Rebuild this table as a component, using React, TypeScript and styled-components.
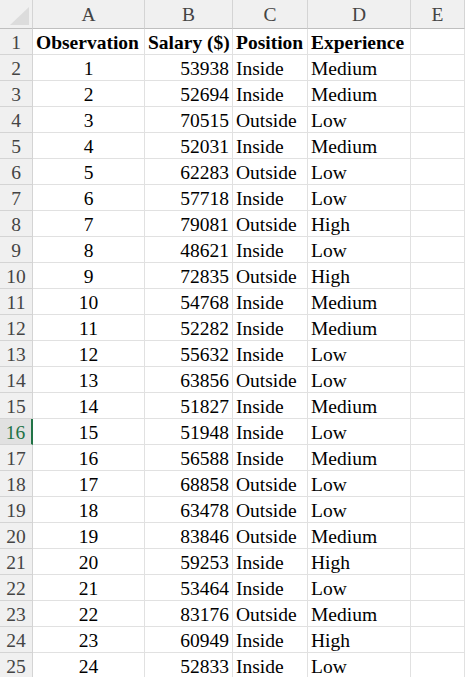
import { createGlobalStyle } from 'styled-components'
import styled from 'styled-components'

const GlobalStyle = createGlobalStyle`
  html, body {
    margin: 0;
    padding: 0;
    background: #ffffff;
    overflow: hidden;
    font-family: "Liberation Serif", "Times New Roman", Tinos, "DejaVu Serif", serif;
  }
`

type Row = [number, number, string, string]

const rows: Row[] = [
  [1, 53938, 'Inside', 'Medium'],
  [2, 52694, 'Inside', 'Medium'],
  [3, 70515, 'Outside', 'Low'],
  [4, 52031, 'Inside', 'Medium'],
  [5, 62283, 'Outside', 'Low'],
  [6, 57718, 'Inside', 'Low'],
  [7, 79081, 'Outside', 'High'],
  [8, 48621, 'Inside', 'Low'],
  [9, 72835, 'Outside', 'High'],
  [10, 54768, 'Inside', 'Medium'],
  [11, 52282, 'Inside', 'Medium'],
  [12, 55632, 'Inside', 'Low'],
  [13, 63856, 'Outside', 'Low'],
  [14, 51827, 'Inside', 'Medium'],
  [15, 51948, 'Inside', 'Low'],
  [16, 56588, 'Inside', 'Medium'],
  [17, 68858, 'Outside', 'Low'],
  [18, 63478, 'Outside', 'Low'],
  [19, 83846, 'Outside', 'Medium'],
  [20, 59253, 'Inside', 'High'],
  [21, 53464, 'Inside', 'Low'],
  [22, 83176, 'Outside', 'Medium'],
  [23, 60949, 'Inside', 'High'],
  [24, 52833, 'Inside', 'Low'],
]

const ACTIVE_ROW = 16

const Sheet = styled.div`
  display: grid;
  grid-template-columns: 33px 112px 88px 75px 103px 1fr;
  grid-template-rows: 29px;
  grid-auto-rows: 26px;
  width: 465px;
  height: 677px;
  overflow: hidden;
  font-family: "Liberation Serif", "Times New Roman", Tinos, "DejaVu Serif", serif;
  font-size: 19.5px;
  color: #000;
`

const Corner = styled.div`
  background: #f0f0f0;
  border-right: 1px solid #d4d4d4;
  border-bottom: 1px solid #bfbfbf;
  display: flex;
  align-items: flex-end;
  justify-content: flex-end;
  padding: 0 3px 3px 0;
`

const ColHead = styled.div`
  background: #f0f0f0;
  border-right: 1px solid #d4d4d4;
  border-bottom: 1px solid #bfbfbf;
  color: #444;
  display: flex;
  align-items: center;
  justify-content: center;
  padding-top: 2px;
`

const RowHead = styled.div<{ $active?: boolean }>`
  background: ${(p) => (p.$active ? '#e1e1e1' : '#f0f0f0')};
  color: ${(p) => (p.$active ? '#217346' : '#444')};
  border-right: ${(p) => (p.$active ? '2px solid #217346' : '1px solid #d4d4d4')};
  border-bottom: 1px solid #d4d4d4;
  display: flex;
  align-items: center;
  justify-content: center;
  padding-top: 2px;
`

const Cell = styled.div<{ $align?: 'left' | 'center' | 'right'; $bold?: boolean }>`
  border-right: 1px solid #e1e1e1;
  border-bottom: 1px solid #e1e1e1;
  display: flex;
  align-items: center;
  justify-content: ${(p) => (p.$align === 'right' ? 'flex-end' : p.$align === 'center' ? 'center' : 'flex-start')};
  padding: 2px 3px 0;
  font-weight: ${(p) => (p.$bold ? 700 : 400)};
  white-space: nowrap;
  overflow: hidden;
`

const App = () => {
  return (
    <>
      <GlobalStyle />
      <Sheet>
        <Corner>
          <svg width="19" height="18" viewBox="0 0 19 18">
            <polygon points="19,0 19,18 0,18" fill="#dcdcdc" />
          </svg>
        </Corner>
        {['A', 'B', 'C', 'D', 'E'].map((c) => (
          <ColHead key={c}>{c}</ColHead>
        ))}

        <RowHead>1</RowHead>
        <Cell $bold>Observation</Cell>
        <Cell $bold>Salary ($)</Cell>
        <Cell $bold>Position</Cell>
        <Cell $bold>Experience</Cell>
        <Cell />

        {rows.map(([obs, salary, position, experience], i) => (
          <Row key={obs} n={i + 2} obs={obs} salary={salary} position={position} experience={experience} />
        ))}
      </Sheet>
    </>
  )
}

const Row = ({
  n,
  obs,
  salary,
  position,
  experience,
}: {
  n: number
  obs: number
  salary: number
  position: string
  experience: string
}) => (
  <>
    <RowHead $active={n === ACTIVE_ROW}>{n}</RowHead>
    <Cell $align="center">{obs}</Cell>
    <Cell $align="right">{salary}</Cell>
    <Cell>{position}</Cell>
    <Cell>{experience}</Cell>
    <Cell />
  </>
)

export default App
